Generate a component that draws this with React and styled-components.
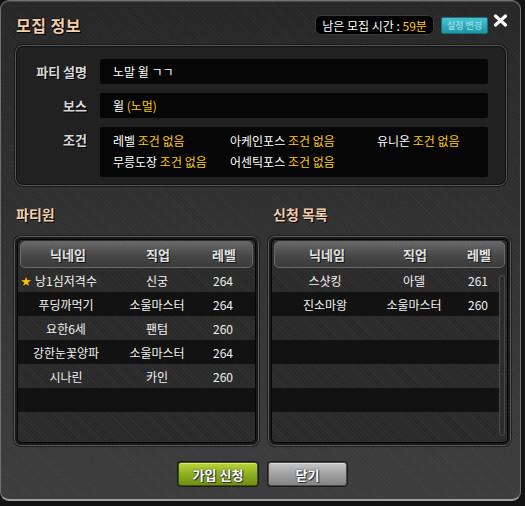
import React from "react";
import styled, { createGlobalStyle } from "styled-components";

const GlobalStyle = createGlobalStyle`
  html, body {
    margin: 0;
    padding: 0;
    background: #121212;
  }
  body {
    font-family: "Noto Sans CJK KR", "Noto Sans", sans-serif;
  }
`;

const Window = styled.div`
  box-sizing: border-box;
  width: 521px;
  height: 501px;
  display: flex;
  flex-direction: column;
  border: 1px solid #707070;
  border-bottom: 2px solid #a0a0a0;
  border-radius: 9px;
  background-color: #2f2f2f;
  background-image: repeating-linear-gradient(
      45deg,
      rgba(255, 255, 255, 0.025) 0 1px,
      transparent 1px 3px
    ),
    linear-gradient(#272727, #3d3d3d);
  box-shadow: inset 0 1px 0 #4a4a4a;
  overflow: hidden;
`;

const TitleBar = styled.div`
  height: 44px;
  padding: 4px 12px 0 15px;
  box-sizing: border-box;
  display: flex;
  align-items: center;
`;

const Title = styled.h1`
  margin: 0;
  flex: 1;
  font-size: 16px;
  font-weight: bold;
  color: #f2cfaa;
  text-shadow: 1px 1px 0 #000, 0 0 2px #000;
  letter-spacing: 0.5px;
`;

const Timer = styled.div`
  width: 119px;
  height: 20px;
  box-sizing: border-box;
  border-radius: 6px;
  background: #000;
  border: 1px solid #3a3a3a;
  display: flex;
  align-items: center;
  justify-content: center;
  font-size: 12px;
  color: #fff;
  white-space: nowrap;
`;

const Yellow = styled.span`
  color: #ffcc00;
`;

const SettingButton = styled.button`
  margin-left: 7px;
  width: 47px;
  height: 17px;
  padding: 0;
  border: 1px solid #1b6f7a;
  border-radius: 2px;
  background: linear-gradient(#45c3d2, #1e96a6);
  color: #8ad6df;
  font-family: inherit;
  font-size: 9px;
  font-weight: bold;
  line-height: 15px;
`;

const CloseIcon = styled.svg`
  margin-left: 5px;
  margin-top: -10px;
  width: 15px;
  height: 13px;
`;

const InfoPanel = styled.div`
  margin: 0 13px 0 14px;
  height: 141px;
  box-sizing: border-box;
  padding: 13px 18px 0 0;
  border: 1px solid #555;
  border-radius: 8px;
  background: #212121;
  box-shadow: inset 0 0 0 1px #111, 0 0 0 1px #1a1a1a;
  display: flex;
  flex-direction: column;
  gap: 9px;
`;

const InfoRow = styled.div`
  display: flex;
  align-items: flex-start;
`;

const Label = styled.div`
  width: 71px;
  margin-right: 13px;
  text-align: right;
  font-size: 13px;
  font-weight: bold;
  color: #d9d9d9;
  text-shadow: 1px 1px 0 #000;
  line-height: 25px;
`;

const Field = styled.div`
  flex: 1;
  height: ${(p) => p.$h || 25}px;
  box-sizing: border-box;
  padding: ${(p) => (p.$grid ? "3px 0 0 13px" : "0 13px")};
  background: #060606;
  border-radius: 2px;
  font-size: 12px;
  color: #fff;
  line-height: 25px;
  ${(p) =>
    p.$grid &&
    `
    display: grid;
    grid-template-columns: 117px 147px 1fr;
    grid-auto-rows: 21px;
    line-height: 21px;
  `}
`;

const Columns = styled.div`
  display: flex;
  gap: 9px;
  padding: 0 9px 0 13px;
`;

const Column = styled.div`
  width: ${(p) => p.$w}px;
  display: flex;
  flex-direction: column;
`;

const SectionTitle = styled.h2`
  margin: 18px 0 12px;
  padding-left: ${(p) => p.$pad}px;
  height: 20px;
  font-size: 14px;
  font-weight: bold;
  color: #f2cfaa;
  text-shadow: 1px 1px 0 #000;
  line-height: 20px;
`;

const TablePanel = styled.div`
  height: 210px;
  box-sizing: border-box;
  border: 1px solid #5a5a5a;
  border-radius: 7px;
  padding: 2px;
  background: #1a1a1a;
  box-shadow: 0 0 0 1px #202020;
`;

const TableInner = styled.div`
  height: 100%;
  box-sizing: border-box;
  border-radius: 5px;
  border: 1px solid #050505;
  background-color: #2a2a2a;
  background-image: repeating-linear-gradient(
    45deg,
    rgba(255, 255, 255, 0.03) 0 1px,
    transparent 1px 3px
  );
  display: flex;
  flex-direction: column;
  overflow: hidden;
  position: relative;
`;

const Header = styled.div`
  margin: 1px 2px 0;
  height: 27px;
  flex-shrink: 0;
  border-radius: 5px;
  border: 1px solid #6a6a6a;
  box-sizing: border-box;
  background: linear-gradient(#686868, #474747 55%, #3b3b3b);
  display: grid;
  grid-template-columns: ${(p) => p.$cols};
  align-items: center;
  font-size: 13px;
  font-weight: bold;
  color: #e2e2e2;
  text-shadow: 1px 1px 0 #111;
`;

const Row = styled.div`
  height: 24px;
  flex-shrink: 0;
  margin-right: ${(p) => (p.$scroll ? 8 : 0)}px;
  display: grid;
  grid-template-columns: ${(p) => p.$cols};
  align-items: center;
  background: ${(p) => (p.$dark ? "#121212" : "transparent")};
  font-size: 12px;
  color: #f2f2f2;
`;

const Cell = styled.div`
  text-align: center;
  white-space: nowrap;
  position: relative;
`;

const Star = styled.span`
  position: absolute;
  left: 3px;
  top: 50%;
  transform: translateY(-50%);
  color: #ffc400;
  font-size: 10px;
`;

const ScrollTrack = styled.div`
  position: absolute;
  right: 2px;
  top: 35px;
  bottom: 6px;
  width: 4px;
  border: 1px solid #4a4a4a;
  border-radius: 3px;
`;

const ButtonBar = styled.div`
  margin-top: 16px;
  display: flex;
  justify-content: center;
  gap: 10px;
  padding-left: 4px;
`;

const ActionButton = styled.button`
  width: ${(p) => p.$w}px;
  height: 24px;
  padding: 0;
  border-radius: 3px;
  border: 1px solid ${(p) => (p.$green ? "#3e5210" : "#4a4a4a")};
  background: ${(p) =>
    p.$green
      ? "linear-gradient(#bcd63a, #8eb020 50%, #6f9012)"
      : "linear-gradient(#c6c6c6, #a0a0a0 50%, #858585)"};
  box-shadow: inset 0 1px 0 rgba(255, 255, 255, 0.4), 0 0 0 1px #1c1c1c;
  color: #fff;
  font-family: inherit;
  font-size: 13px;
  font-weight: bold;
  text-shadow: 1px 1px 0 #333, 0 0 2px #333;
`;

const LEFT_COLS = "96px 86px 46px";
const LEFT_HEAD = "94px 86px 46px";
const RIGHT_COLS = "106px 72px 56px";
const RIGHT_HEAD = "104px 72px 56px";

const members = [
  ["낭1심저격수", "신궁", "264", true],
  ["푸딩까먹기", "소울마스터", "264"],
  ["요한6세", "팬텀", "260"],
  ["강한눈꽃양파", "소울마스터", "264"],
  ["시나린", "카인", "260"],
  null,
  null,
];

const applicants = [
  ["스샷킹", "아델", "261"],
  ["진소마왕", "소울마스터", "260"],
  null,
  null,
  null,
  null,
  null,
];

function Table({ rows, cols, headCols, scroll }) {
  return (
    <TablePanel>
      <TableInner>
        <Header $cols={headCols}>
          <Cell>닉네임</Cell>
          <Cell>직업</Cell>
          <Cell>레벨</Cell>
        </Header>
        {rows.map((r, i) => (
          <Row key={i} $cols={cols} $dark={i % 2 === 1} $scroll={scroll}>
            {r && (
              <>
                <Cell>
                  {r[3] && <Star>★</Star>}
                  {r[0]}
                </Cell>
                <Cell>{r[1]}</Cell>
                <Cell>{r[2]}</Cell>
              </>
            )}
          </Row>
        ))}
        {scroll && <ScrollTrack />}
      </TableInner>
    </TablePanel>
  );
}

export default function App() {
  return (
    <>
      <GlobalStyle />
      <Window>
        <TitleBar>
          <Title>모집 정보</Title>
          <Timer>
            남은 모집 시간 :&nbsp;<Yellow>59분</Yellow>
          </Timer>
          <SettingButton>설정 변경</SettingButton>
          <CloseIcon viewBox="0 0 15 13">
            <path
              d="M2.5 2 L12.5 11 M12.5 2 L2.5 11"
              stroke="#fff"
              strokeWidth="3.2"
              strokeLinecap="round"
            />
          </CloseIcon>
        </TitleBar>

        <InfoPanel>
          <InfoRow>
            <Label>파티 설명</Label>
            <Field>노말 윌 ㄱㄱ</Field>
          </InfoRow>
          <InfoRow>
            <Label>보스</Label>
            <Field>
              윌 <Yellow>(노멀)</Yellow>
            </Field>
          </InfoRow>
          <InfoRow>
            <Label>조건</Label>
            <Field $h={50} $grid>
              <span>
                레벨 <Yellow>조건 없음</Yellow>
              </span>
              <span>
                아케인포스 <Yellow>조건 없음</Yellow>
              </span>
              <span>
                유니온 <Yellow>조건 없음</Yellow>
              </span>
              <span>
                무릉도장 <Yellow>조건 없음</Yellow>
              </span>
              <span>
                어센틱포스 <Yellow>조건 없음</Yellow>
              </span>
            </Field>
          </InfoRow>
        </InfoPanel>

        <Columns>
          <Column $w={245}>
            <SectionTitle $pad={2}>파티원</SectionTitle>
            <Table rows={members} cols={LEFT_COLS} headCols={LEFT_HEAD} />
          </Column>
          <Column $w={243}>
            <SectionTitle $pad={5}>신청 목록</SectionTitle>
            <Table
              rows={applicants}
              cols={RIGHT_COLS}
              headCols={RIGHT_HEAD}
              scroll
            />
          </Column>
        </Columns>

        <ButtonBar>
          <ActionButton $green $w={80}>
            가입 신청
          </ActionButton>
          <ActionButton $w={79}>닫기</ActionButton>
        </ButtonBar>
      </Window>
    </>
  );
}
